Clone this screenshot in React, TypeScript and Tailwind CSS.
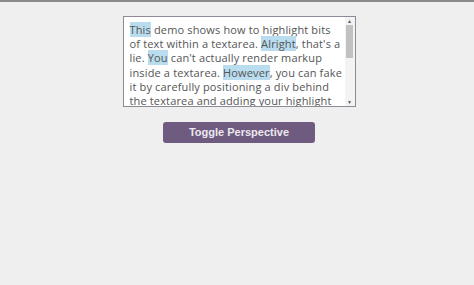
export default function App() {
  const hl = "bg-[#b9dcee] text-[#555]";
  return (
    <div className="min-h-[285px] w-full bg-[#efefef] border-t-2 border-[#8a8a8a]">
      <div className="flex flex-col items-center pl-[4px] pt-[14px]">
        <div className="flex h-[91px] w-[233px] border border-[#8f8a96] bg-white">
          <div className="min-w-0 flex-1 overflow-hidden pl-[6px] pr-[2px] pt-[6px] font-['Open_Sans',sans-serif] text-[11px] leading-[14.2px] tracking-[0.15px] text-[#555]">
            <span className={hl}>This</span> demo shows how to highlight bits of text within a textarea.{" "}
            <span className={hl}>Alright</span>, that's a lie. <span className={hl}>You</span> can't actually render
            markup inside a textarea. <span className={hl}>However</span>, you can fake it by carefully positioning a
            div behind the textarea and adding your highlight markup there.
          </div>
          <div className="flex w-[10px] shrink-0 flex-col items-center bg-[#f3f3f3]">
            <div className="flex h-[8px] items-center justify-center text-[5px] leading-none text-[#555]">▲</div>
            <div className="h-[33px] w-[7px] bg-[#c1c1c1]" />
            <div className="flex-1" />
            <div className="flex h-[8px] items-center justify-center text-[5px] leading-none text-[#555]">▼</div>
          </div>
        </div>
        <button className="mt-[15px] h-[21px] w-[152px] rounded-[3px] bg-[#6f5b7f] font-['Liberation_Sans',Arial,sans-serif] text-[11px] font-bold text-[#ece8f0]">
          Toggle Perspective
        </button>
      </div>
    </div>
  );
}
